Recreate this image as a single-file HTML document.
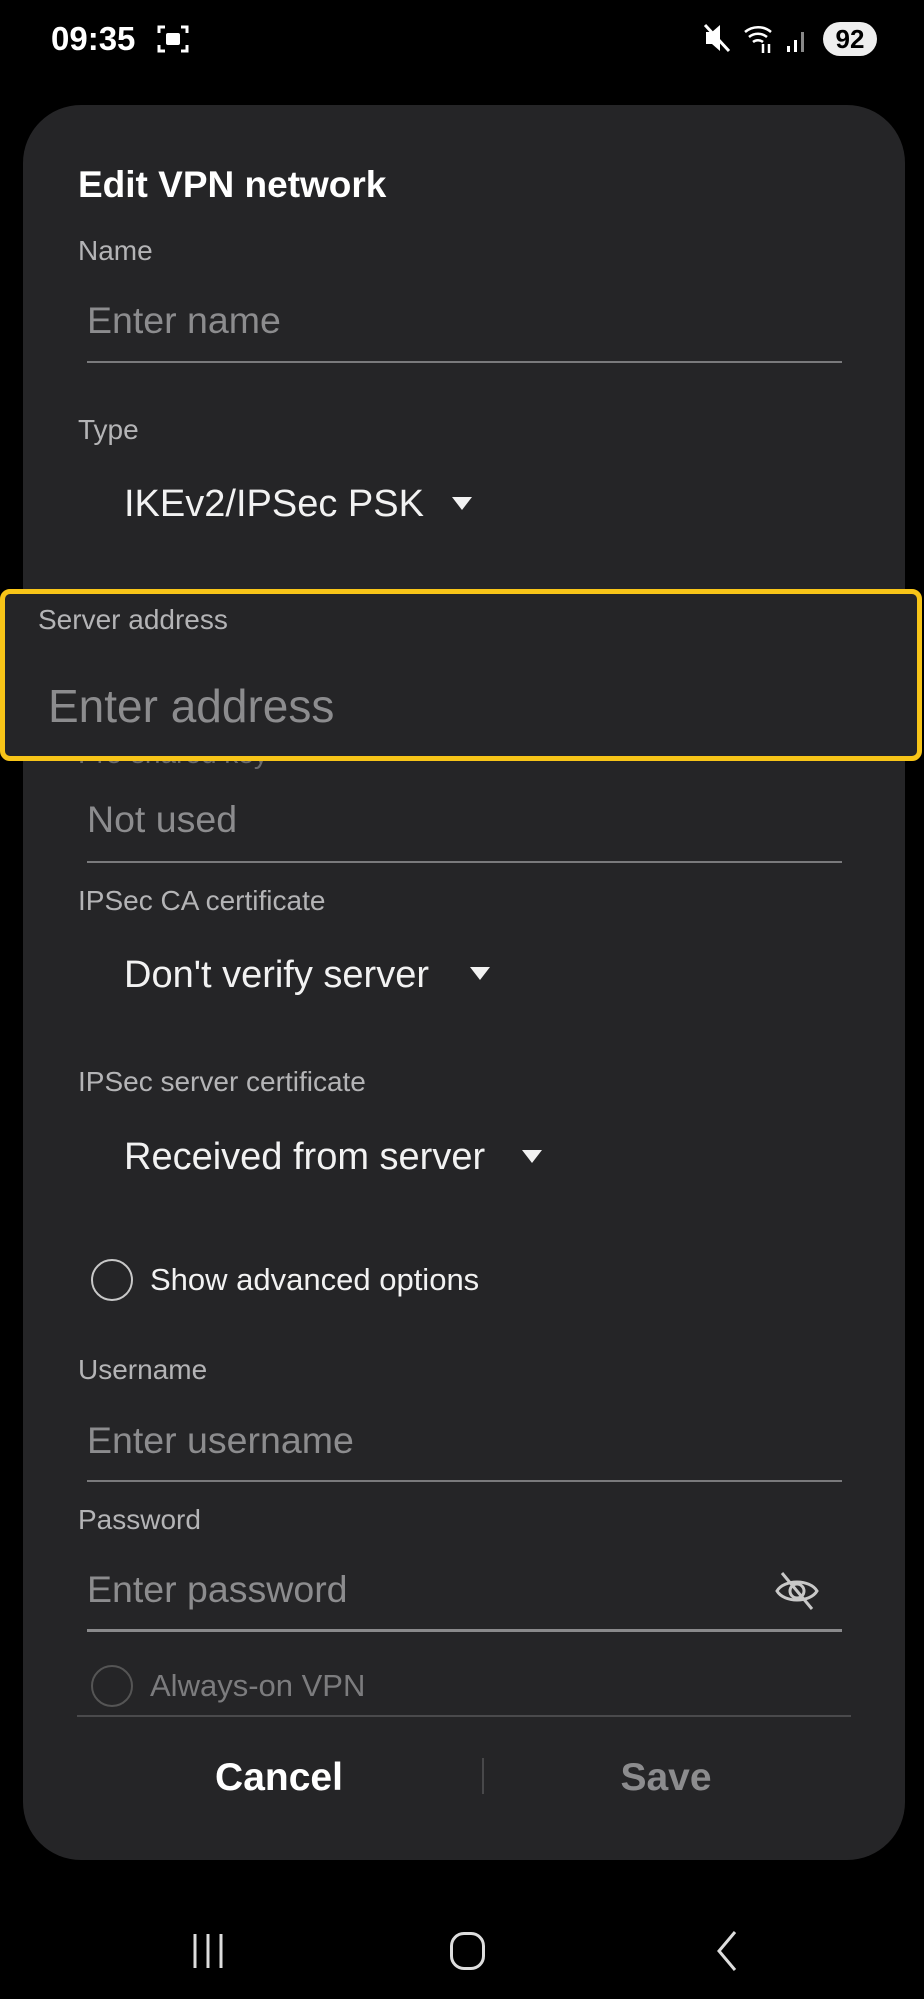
<!DOCTYPE html>
<html><head><meta charset="utf-8"><style>
*{margin:0;padding:0;box-sizing:border-box}
body{width:924px;height:1999px;background:#000;position:relative;overflow:hidden;font-family:"Liberation Sans",sans-serif}
.a{position:absolute;white-space:nowrap;line-height:1}
.card{position:absolute;left:23px;top:105px;width:882px;height:1755px;background:#252527;border-radius:58px}
.lbl{font-size:28px;color:#b4b4b6}
.ph{font-size:37.5px;color:#8c8c8e}
.val{font-size:38px;color:#f2f2f2}
.ul{position:absolute;left:87px;width:755px;height:2px;background:#7a7a7c}
.tri{position:absolute;width:0;height:0;border-left:10px solid transparent;border-right:10px solid transparent;border-top:13px solid #f2f2f2}
.rad{position:absolute;width:42px;height:42px;border-radius:50%;border:2.5px solid #c8c8c8}
</style></head><body>
<div class="a" style="left:51px;top:22px;font-size:33px;font-weight:bold;color:#fff">09:35</div>
<svg class="a" style="left:157px;top:24px" width="32" height="30" viewBox="0 0 32 30" fill="none" stroke="#fff" stroke-width="3"><path d="M2 9V3h6M24 3h6v6M30 21v6h-6M8 27H2v-6"/><rect x="9" y="9" width="14" height="12" rx="2" fill="#fff" stroke="none"/></svg>
<svg class="a" style="left:702px;top:22px" width="30" height="32" viewBox="0 0 30 32"><path d="M4 10h6l8-7v26l-8-7H4z" fill="#fff"/><path d="M3 3l24 26" stroke="#fff" stroke-width="3"/></svg>
<svg class="a" style="left:743px;top:22px" width="70" height="32" viewBox="0 0 70 32" fill="none" stroke="#fff" stroke-width="2.5"><path d="M2 10a20 20 0 0 1 26 0M6 15a14 14 0 0 1 18 0M10 20a8 8 0 0 1 10 0"/><path d="M20 22v9M26 31v-9" /><rect x="44" y="24" width="3" height="6" fill="#fff" stroke="none"/><rect x="51" y="18" width="3" height="12" fill="#fff" stroke="none"/><rect x="58" y="10" width="3" height="20" fill="#888" stroke="none"/></svg>
<div class="a" style="left:823px;top:22px;width:54px;height:34px;border-radius:17px;background:#eee;color:#000;font-size:26px;font-weight:bold;text-align:center;line-height:34px">92</div>
<div class="card"></div>
<div class="a" style="left:78px;top:166px;font-size:37px;font-weight:bold;color:#fff">Edit VPN network</div>
<div class="a lbl" style="left:78px;top:237px">Name</div>
<div class="a ph" style="left:87px;top:302px">Enter name</div>
<div class="ul" style="top:361px"></div>
<div class="a lbl" style="left:78px;top:416px">Type</div>
<div class="a val" style="left:124px;top:485px">IKEv2/IPSec PSK</div>
<div class="tri" style="left:452px;top:497px"></div>
<div class="a lbl" style="left:78px;top:740px;color:#6a6a6c">Pre-shared key</div>
<div class="a" style="left:0;top:589px;width:922px;height:172px;border:5px solid #f8c518;border-radius:10px;background:#252527"></div>
<div class="a lbl" style="left:38px;top:606px">Server address</div>
<div class="a" style="left:48px;top:683px;font-size:46px;color:#8c8c8e">Enter address</div>
<div class="a ph" style="left:87px;top:801px">Not used</div>
<div class="ul" style="top:861px"></div>
<div class="a lbl" style="left:78px;top:887px">IPSec CA certificate</div>
<div class="a val" style="left:124px;top:956px">Don't verify server</div>
<div class="tri" style="left:470px;top:967px"></div>
<div class="a lbl" style="left:78px;top:1068px">IPSec server certificate</div>
<div class="a val" style="left:124px;top:1138px">Received from server</div>
<div class="tri" style="left:522px;top:1150px"></div>
<div class="rad" style="left:91px;top:1259px"></div>
<div class="a" style="left:150px;top:1264px;font-size:31px;color:#f2f2f2">Show advanced options</div>
<div class="a lbl" style="left:78px;top:1356px">Username</div>
<div class="a ph" style="left:87px;top:1422px">Enter username</div>
<div class="ul" style="top:1480px"></div>
<div class="a lbl" style="left:78px;top:1506px">Password</div>
<div class="a ph" style="left:87px;top:1571px">Enter password</div>
<svg class="a" style="left:774px;top:1569px" width="46" height="44" viewBox="0 0 46 44" fill="none" stroke="#c8c8c8" stroke-width="3"><path d="M3 22C10 10 36 10 43 22C36 34 10 34 3 22Z"/><circle cx="23" cy="22" r="7"/><path d="M8 4l30 36"/></svg>
<div class="ul" style="top:1629px;height:3px;background:#8a8a8c"></div>
<div class="rad" style="left:91px;top:1665px;border-color:#555"></div>
<div class="a" style="left:150px;top:1670px;font-size:31px;color:#7c7c7e">Always-on VPN</div>
<div class="a" style="left:77px;top:1715px;width:774px;height:2px;background:#4a4a4c"></div>
<div class="a" style="left:179px;top:1758px;width:200px;text-align:center;font-size:39px;font-weight:bold;color:#fff">Cancel</div>
<div class="a" style="left:482px;top:1758px;width:2px;height:36px;background:#48484a"></div>
<div class="a" style="left:566px;top:1758px;width:200px;text-align:center;font-size:39px;font-weight:bold;color:#8c8c8e">Save</div>
<svg class="a" style="left:190px;top:1932px" width="36" height="38" viewBox="0 0 36 38" stroke="#ddd" stroke-width="3"><path d="M5 2v34M18 2v34M31 2v34"/></svg>
<div class="a" style="left:450px;top:1932px;width:35px;height:38px;border:3px solid #ddd;border-radius:14px"></div>
<svg class="a" style="left:713px;top:1930px" width="28" height="42" viewBox="0 0 28 42" fill="none" stroke="#ddd" stroke-width="3"><path d="M22 2L6 21l16 19"/></svg>
</body></html>
